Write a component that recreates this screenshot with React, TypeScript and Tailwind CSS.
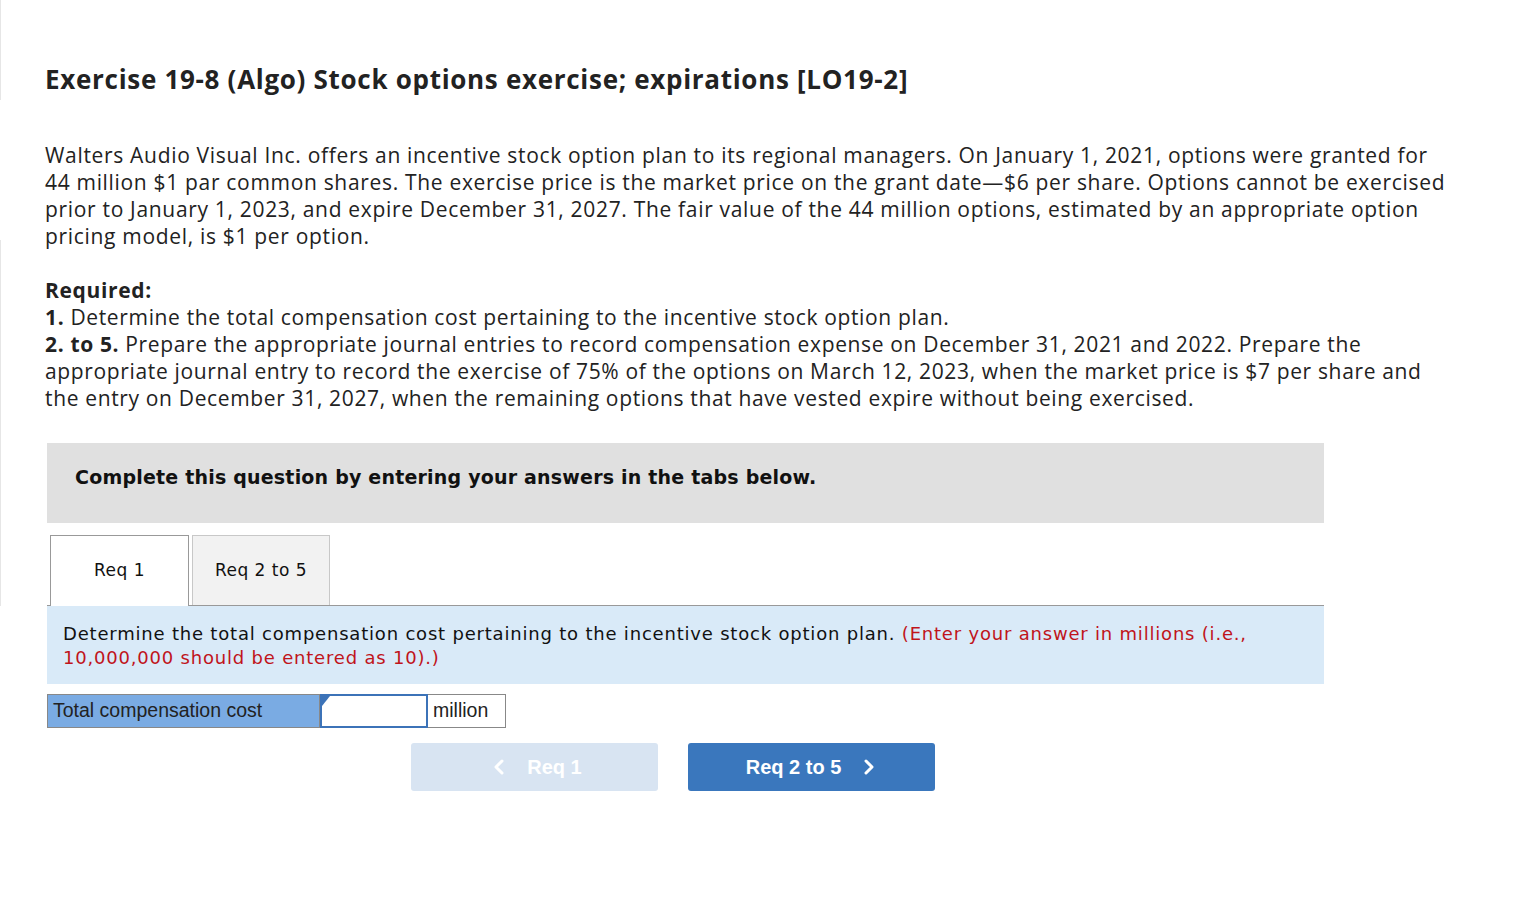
import React from 'react';
import { ChevronLeft, ChevronRight } from 'lucide-react';

export default function App() {
  return (
    <div className="min-h-[900px] bg-white text-[#222] relative">
      {/* faint left edge */}
      <div className="absolute left-0 top-0 h-[100px] w-px bg-[#e6e6e6]" />
      <div className="absolute left-0 top-[240px] h-[366px] w-px bg-[#e6e6e6]" />

      <div className="pl-[45px] pt-[60px] w-[1500px]" style={{ fontFamily: '"Open Sans", Lato, sans-serif' }}>
        <h1 className="text-[26px] font-bold leading-[38px] text-[#222] tracking-[0.7px]">
          Exercise 19-8 (Algo) Stock options exercise; expirations [LO19-2]
        </h1>

        <p className="mt-[44px] text-[21px] leading-[27px] text-[#222] tracking-[0.68px] whitespace-nowrap">
          Walters Audio Visual Inc. offers an incentive stock option plan to its regional managers. On January 1, 2021, options were granted for
          <br />
          44 million $1 par common shares. The exercise price is the market price on the grant date—$6 per share. Options cannot be exercised
          <br />
          prior to January 1, 2023, and expire December 31, 2027. The fair value of the 44 million options, estimated by an appropriate option
          <br />
          pricing model, is $1 per option.
        </p>

        <div className="mt-[27px] text-[21px] leading-[27px] tracking-[0.65px] whitespace-nowrap">
          <p className="font-bold">Required:</p>
          <p><span className="font-bold">1.</span> Determine the total compensation cost pertaining to the incentive stock option plan.</p>
          <p>
            <span className="font-bold">2. to 5.</span> Prepare the appropriate journal entries to record compensation expense on December 31, 2021 and 2022. Prepare the
            <br />
            appropriate journal entry to record the exercise of 75% of the options on March 12, 2023, when the market price is $7 per share and
            <br />
            the entry on December 31, 2027, when the remaining options that have vested expire without being exercised.
          </p>
        </div>
      </div>

      <div className="ml-[47px] mt-[31px] w-[1277px]" style={{ fontFamily: '"DejaVu Sans", Verdana, sans-serif' }}>
        <div className="h-[80px] bg-[#e0e0e0] pl-[28px] pt-[20px]">
          <p className="text-[19px] font-bold text-[#111] tracking-[0.2px]">
            Complete this question by entering your answers in the tabs below.
          </p>
        </div>

        <div className="mt-[12px] flex gap-[3px] pl-[3px] border-b border-[#999]">
          <div className="w-[139px] h-[71px] bg-white border border-[#999] border-b-0 flex items-center justify-center text-[17px] tracking-[0.5px] text-[#111] -mb-px relative z-10">
            Req 1
          </div>
          <div className="w-[138px] h-[70px] bg-[#f2f2f2] border border-[#c8c8c8] border-b-0 flex items-center justify-center text-[17px] tracking-[0.5px] text-[#111]">
            Req 2 to 5
          </div>
        </div>

        <div className="bg-[#d9eaf8] px-[16px] pt-[16px] pb-[14px] text-[18px] leading-[24px] tracking-[0.8px] text-[#111] whitespace-nowrap">
          Determine the total compensation cost pertaining to the incentive stock option plan.{' '}
          <span className="text-[#c0141b]">(Enter your answer in millions (i.e.,</span>
          <br />
          <span className="text-[#c0141b]">10,000,000 should be entered as 10).)</span>
        </div>

        <div className="mt-[10px] flex h-[34px]" style={{ fontFamily: '"Liberation Sans", Arial, sans-serif' }}>
          <div className="w-[273px] bg-[#7aabe3] border border-[#888] flex items-center pl-[5px] text-[19.5px] text-[#222]">
            Total compensation cost
          </div>
          <div className="relative w-[108px] bg-white border-2 border-[#3c73b8]">
            <div className="absolute left-0 top-0 w-0 h-0 border-t-[10px] border-t-[#3c73b8] border-r-[8px] border-r-transparent" />
          </div>
          <div className="w-[78px] bg-white border border-[#888] border-l-0 flex items-center pl-[5px] text-[19.5px] text-[#222]">
            million
          </div>
        </div>

        <div className="mt-[15px] ml-[364px] flex gap-[30px]" style={{ fontFamily: '"Liberation Sans", Arial, sans-serif' }}>
          <button className="w-[247px] h-[48px] rounded-[3px] bg-[#d8e4f2] text-white font-bold text-[20px] flex items-center justify-center gap-[16px]">
            <ChevronLeft size={24} strokeWidth={3} />
            <span>Req 1</span>
          </button>
          <button className="w-[247px] h-[48px] rounded-[3px] bg-[#3a77bd] text-white font-bold text-[20px] flex items-center justify-center gap-[16px] pl-[4px]">
            <span>Req 2 to 5</span>
            <ChevronRight size={24} strokeWidth={3} />
          </button>
        </div>
      </div>
    </div>
  );
}
